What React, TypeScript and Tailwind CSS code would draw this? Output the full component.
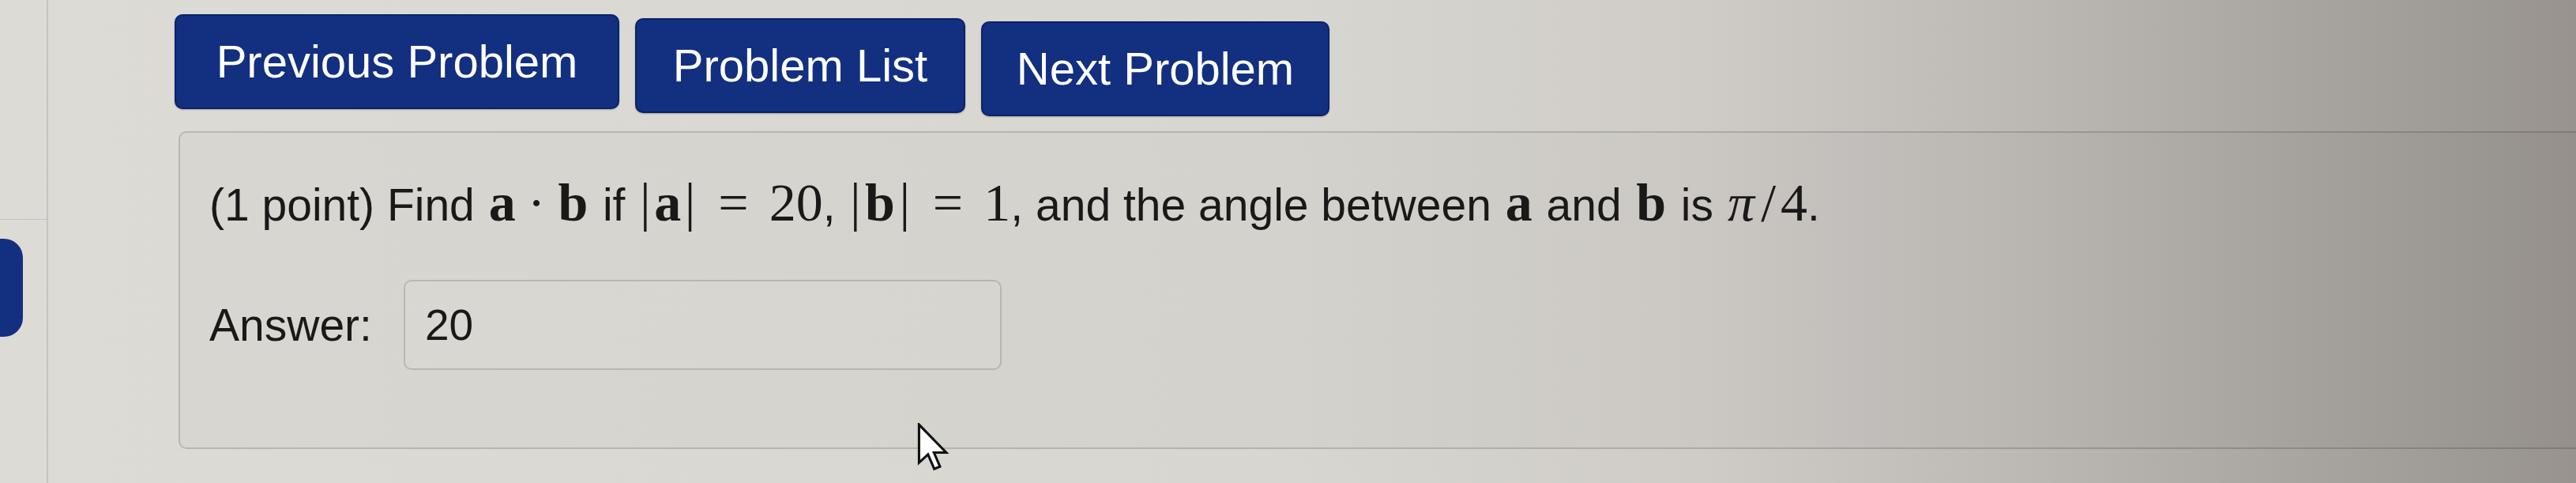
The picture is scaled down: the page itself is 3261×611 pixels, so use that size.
const sans = "font-['Liberation_Sans',Arial,Helvetica,sans-serif]"
const serif = "font-['Liberation_Serif','Times_New_Roman',serif]"

function NavButton({ label, width, offset }: { label: string; width: string; offset: string }) {
  return (
    <button
      className={`${width} ${offset} h-[120px] shrink-0 rounded-[10px] border-2 border-[#0b2268] bg-[#132f80] text-center text-[58px] leading-none text-white shadow-[0_1px_2px_rgba(0,0,0,0.25)] ${sans}`}
    >
      {label}
    </button>
  )
}

// one math glyph in a box of MathJax width (w is in em of the math font)
function G({ w, children, bold, italic }: { w: string; children: React.ReactNode; bold?: boolean; italic?: boolean }) {
  return (
    <span
      className={`${serif} ${w} inline-block text-center text-[68px] leading-none ${bold ? "font-bold" : "font-normal"} ${italic ? "italic" : "not-italic"}`}
    >
      {children}
    </span>
  )
}

const Bar = () => <G w="w-[0.278em]">|</G>
const Eq = () => <G w="w-[1.334em]">=</G>
const VA = () => <G w="w-[0.559em]" bold>a</G>
const VB = () => <G w="w-[0.639em]" bold>b</G>

function Cursor() {
  return (
    <svg
      className="absolute left-[1161px] top-[535px]"
      width="42"
      height="62"
      viewBox="0 0 12 18"
      fill="none"
    >
      <path
        d="M0.6 0.6 L0.6 14.6 L3.9 11.6 L6.2 16.9 L8.3 16 L6.1 10.9 L10.6 10.9 Z"
        fill="#fff"
        stroke="#111"
        strokeWidth="0.9"
        strokeLinejoin="miter"
      />
    </svg>
  )
}

export default function App() {
  return (
    <div className="relative flex h-[611px] w-[3261px] overflow-hidden bg-[linear-gradient(to_right,#dddbd6_0%,#d8d6d1_50%,#cfccc7_66%,#bdb9b5_78%,#a7a39f_90%,#98938f_100%)] text-[#1a1918]">
      <aside className="flex w-[61px] shrink-0 flex-col border-r-2 border-black/10">
        <div className="h-[278px] border-b border-black/10" />
        <div className="mt-[24px] h-[124px] w-[29px] rounded-r-[24px] bg-[#132f80]" />
      </aside>

      <main className="flex-1 pl-[160px] pt-[18px]">
        <nav className="flex items-start gap-[20px]">
          <NavButton label="Previous Problem" width="w-[563px]" offset="mt-0" />
          <NavButton label="Problem List" width="w-[418px]" offset="mt-[5px]" />
          <NavButton label="Next Problem" width="w-[441px]" offset="mt-[9px]" />
        </nav>

        <section
          className={`-mr-[20px] ml-[5px] mt-[19px] rounded-l-[10px] border-2 border-black/15 bg-black/[0.015] pb-[98px] pl-[37px] pt-[54px] text-[57px] ${sans}`}
        >
          <p className="whitespace-nowrap leading-[67px]">
            (1 point) Find <VA />
            <G w="w-[0.72em]">·</G>
            <VB /> if <Bar />
            <VA />
            <Bar />
            <Eq />
            <G w="w-[1em]">20</G>, <Bar />
            <VB />
            <Bar />
            <Eq />
            <G w="w-[0.5em]">1</G>, and the angle between <VA /> and <VB /> is{" "}
            <G w="w-[0.57em]" italic>
              π
            </G>
            <G w="w-[0.45em]">/</G>
            <G w="w-[0.5em]">4</G>.
          </p>

          <div className="mt-[61px] flex items-center gap-[40px]">
            <span className="leading-none">Answer:</span>
            <div className="flex h-[114px] w-[757px] items-center rounded-[10px] border-2 border-black/15 bg-white/[0.06] pl-[25px] text-[55px] leading-none">
              20
            </div>
          </div>
        </section>
      </main>

      <Cursor />
    </div>
  )
}
